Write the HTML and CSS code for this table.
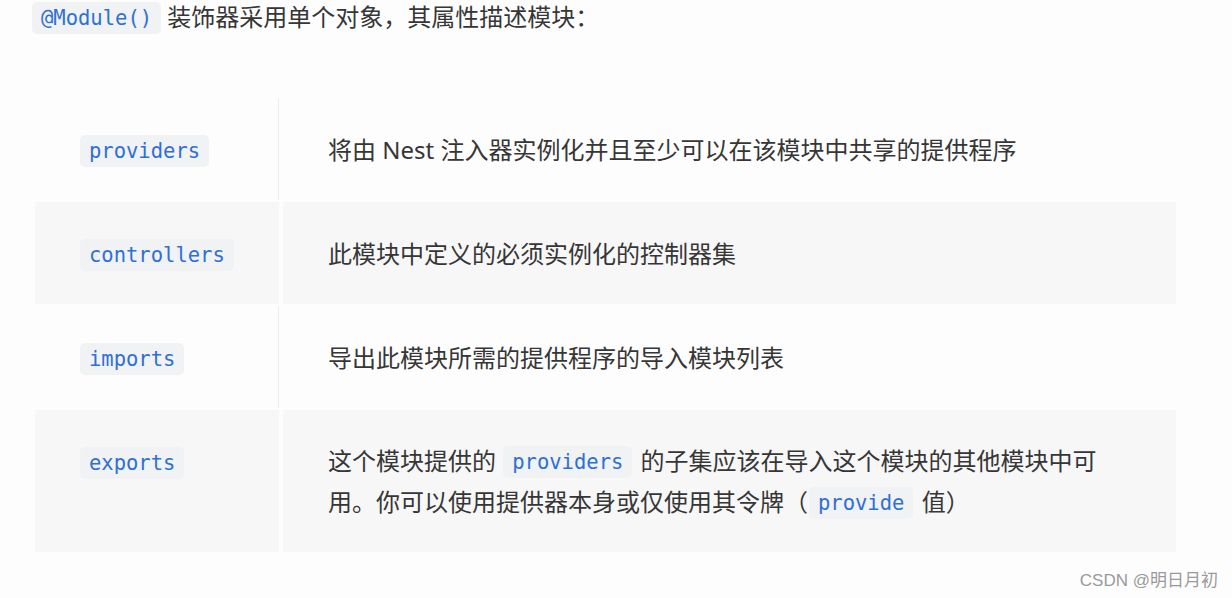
FILE: index.html
```html
<!DOCTYPE html>
<html lang="zh-CN">

<head>
    <meta charset="utf-8" />
    <meta name="viewport" content="width=device-width" />
    <title>@Module() 装饰器</title>
    <link rel="stylesheet" href="styles.css">
</head>
<body>
    <main class="article">
        <p class="intro"><code class="code">@Module()</code> 装饰器采用单个对象，其属性描述模块：</p>

        <!-- Table start -->
        <table class="table">
            <tbody>
                <tr class="row">
                    <td class="key"><code class="code">providers</code></td>
                    <td class="desc">将由 Nest 注入器实例化并且至少可以在该模块中共享的提供程序</td>
                </tr>
                <tr class="row row-alt">
                    <td class="key"><code class="code">controllers</code></td>
                    <td class="desc">此模块中定义的必须实例化的控制器集</td>
                </tr>
                <tr class="row">
                    <td class="key"><code class="code">imports</code></td>
                    <td class="desc">导出此模块所需的提供程序的导入模块列表</td>
                </tr>
                <tr class="row row-alt row-tall">
                    <td class="key"><code class="code">exports</code></td>
                    <td class="desc">这个模块提供的 <code class="code code-inline">providers</code> 的子集应该在导入这个模块的其他模块中可用。你可以使用提供器本身或仅使用其令牌（<code class="code code-inline">provide</code> 值）</td>
                </tr>
            </tbody>
        </table>
        <!-- Table end -->

        <div class="watermark">CSDN @明日月初</div>
    </main>
</body>

</html>
```

FILE: styles.css
```css
:root {
    --text-color: #363636;
    --code-color: #2f6fd6;
    --code-bg: #f0f2f4;
    --row-alt: #f7f7f8;
    --page-bg: #fdfdfd;
    --line-color: #ececec;
}

* {
    box-sizing: border-box;
    margin: 0;
    padding: 0;
}

body {
    background-color: var(--page-bg);
    color: var(--text-color);
    font-family: "Noto Sans", "Noto Sans CJK SC", sans-serif;
    font-size: 24px;
}

.article {
    padding: 1px 56px 0 35px;
}

.intro {
    line-height: 32px;
    margin-left: -3px;
    margin-bottom: 64px;
}

.code {
    display: inline-block;
    font-family: "DejaVu Sans Mono", "Liberation Mono", monospace;
    font-size: 20.5px;
    line-height: 24px;
    padding: 4px 9px;
    border-radius: 5px;
    background-color: var(--code-bg);
    color: var(--code-color);
    vertical-align: 1px;
}

.code-inline {
    margin: 0 2px 0 1px;
}

/* Table */
.table {
    width: 1141px;
    border-collapse: separate;
    border-spacing: 0 2px;
    table-layout: fixed;
    margin-top: -2px;
}

.table td {
    height: 102px;
    vertical-align: middle;
}

.row-tall td {
    height: 142px;
}

.key {
    width: 248px;
    padding: 3px 0 0 45px;
    line-height: 32px;
    border-right: 4px solid var(--page-bg);
    box-shadow: inset -1px 0 0 var(--line-color);
}

.key .code {
    vertical-align: top;
}

.row-tall .key {
    vertical-align: top;
    padding-top: 37px;
}

.row-alt .key {
    box-shadow: none;
}

.row-alt td {
    background-color: var(--row-alt);
}

.desc {
    padding: 0 70px 0 45px;
    line-height: 41px;
}

.watermark {
    text-align: right;
    margin-top: 12px;
    margin-right: -42px;
    font-family: "Liberation Sans", "Noto Sans CJK SC", sans-serif;
    font-size: 17px;
    color: #9a9a9a;
}
```
